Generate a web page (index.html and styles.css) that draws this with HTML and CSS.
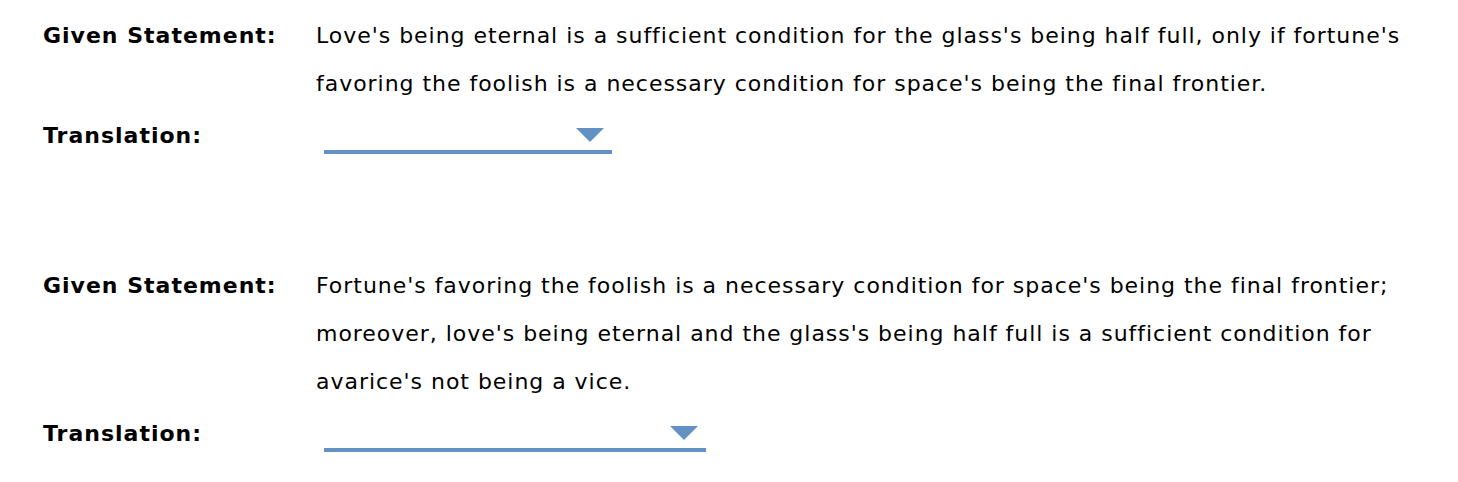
FILE: index.html
```html
<!DOCTYPE html>
<html>
<head>
<meta charset="utf-8">
<link rel="stylesheet" href="styles.css">
</head>
<body>
<div class="page">
  <div class="block">
    <div class="label">Given Statement:</div>
    <div class="value">Love's being eternal is a sufficient condition for the glass's being half full, only if fortune's favoring the foolish is a necessary condition for space's being the final frontier.</div>
    <div class="label">Translation:</div>
    <div class="value"><div class="select s1"><span class="arrow"></span></div></div>
  </div>
  <div class="block second">
    <div class="label">Given Statement:</div>
    <div class="value">Fortune's favoring the foolish is a necessary condition for space's being the final frontier; moreover, love's being eternal and the glass's being half full is a sufficient condition for avarice's not being a vice.</div>
    <div class="label">Translation:</div>
    <div class="value"><div class="select s2"><span class="arrow"></span></div></div>
  </div>
</div>
</body>
</html>
```

FILE: styles.css
```css
html, body {
  margin: 0;
  padding: 0;
  background: #fff;
}
.page {
  padding: 12px 0 0 43px;
  font-family: "DejaVu Sans", Verdana, sans-serif;
  font-size: 22px;
  color: #000;
}
.block {
  display: grid;
  grid-template-columns: 273px 1100px;
  row-gap: 4px;
  line-height: 48px;
}
.second {
  margin-top: 102px;
}
.value {
  letter-spacing: 0.97px;
}
.label {
  font-weight: bold;
  letter-spacing: 1px;
}
.select {
  position: relative;
  margin-left: 8px;
  height: 38px;
  border-bottom: 4px solid #6391c4;
}
.s1 { width: 288px; }
.s2 { width: 382px; }
.arrow {
  position: absolute;
  top: 16px;
  right: 8px;
  width: 0;
  height: 0;
  border-left: 14px solid transparent;
  border-right: 14px solid transparent;
  border-top: 14px solid #6391c4;
}
```
